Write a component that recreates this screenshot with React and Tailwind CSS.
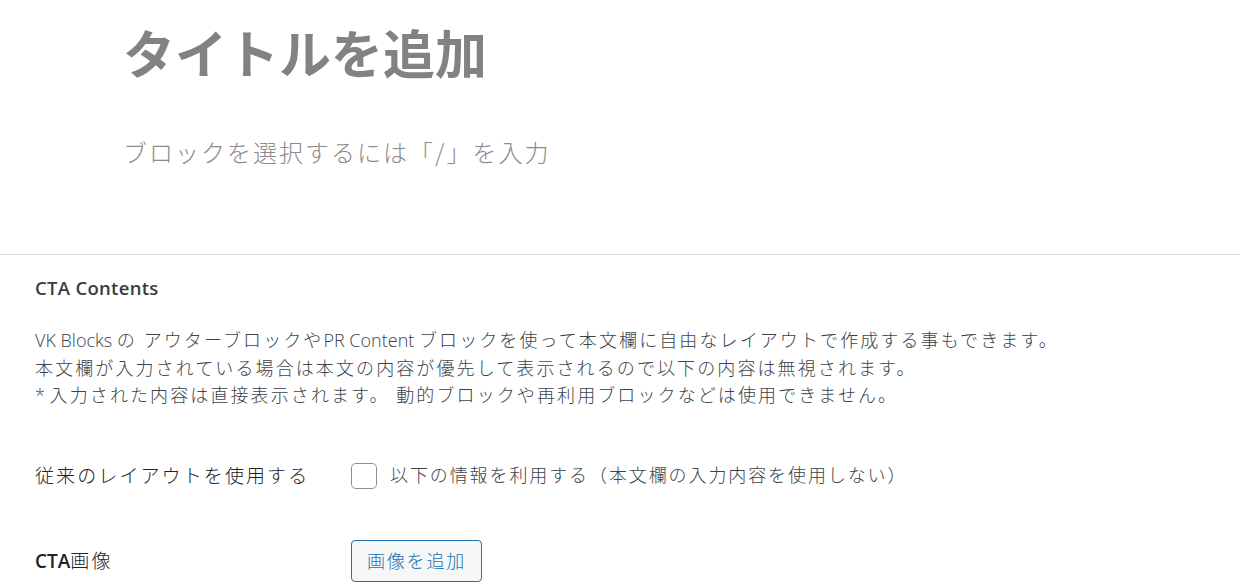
const latin = 'tracking-normal';

function Row({ label, children }) {
  return (
    <div className="flex items-center">
      <div className="w-[316px] shrink-0 text-[19px] tracking-[2.1px] text-[#1d2327] font-light">{label}</div>
      <div className="flex items-center">{children}</div>
    </div>
  );
}

export default function App() {
  return (
    <div className="min-h-[586px] bg-white font-['Open_Sans','Noto_Sans_CJK_JP',sans-serif]">
      <div className="pl-[123px] pt-[21px] h-[254px]">
        <h1 className="font-['Noto_Sans_CJK_JP',sans-serif] font-bold text-[52px] leading-[62px] text-[#828282]">
          タイトルを追加
        </h1>
        <p className="mt-[53px] font-['Noto_Sans_CJK_JP',sans-serif] font-light text-[24px] leading-[32px] tracking-[2px] text-[#8c8c8c]">
          ブロックを選択するには「/」を入力
        </p>
      </div>

      <div className="border-t border-[#dcdcde] px-[35px] pt-[20px]">
        <h2 className="text-[18.5px] leading-[26px] font-semibold text-[#3c3c3c] tracking-[0.3px]">CTA Contents</h2>

        <div className="mt-[26px] text-[18px] leading-[27.5px] tracking-[2.1px] text-[#3c434a] font-light">
          <p>
            <span className={latin}>VK Blocks </span>の アウターブロックや<span className={latin}>PR Content </span>
            ブロックを使って本文欄に自由なレイアウトで作成する事もできます。
          </p>
          <p>本文欄が入力されている場合は本文の内容が優先して表示されるので以下の内容は無視されます。</p>
          <p>
            <span className={latin}>* </span>入力された内容は直接表示されます。 動的ブロックや再利用ブロックなどは使用できません。
          </p>
        </div>

        <div className="mt-[52px]">
          <Row label="従来のレイアウトを使用する">
            <span className="w-[26px] h-[26px] rounded-[5px] border-[1.5px] border-[#8c8f94] bg-white" />
            <span className="ml-[13px] text-[18px] tracking-[1.9px] text-[#3c434a] font-light">
              以下の情報を利用する（本文欄の入力内容を使用しない）
            </span>
          </Row>
        </div>

        <div className="mt-[50px]">
          <Row
            label={
              <>
                <span className="font-semibold tracking-normal">CTA</span>画像
              </>
            }
          >
            <button className="h-[42px] w-[131px] rounded-[4px] border border-[#2271b1] bg-[#f6f7f7] text-[18px] tracking-[1.8px] text-[#2271b1] font-light">
              画像を追加
            </button>
          </Row>
        </div>
      </div>
    </div>
  );
}
